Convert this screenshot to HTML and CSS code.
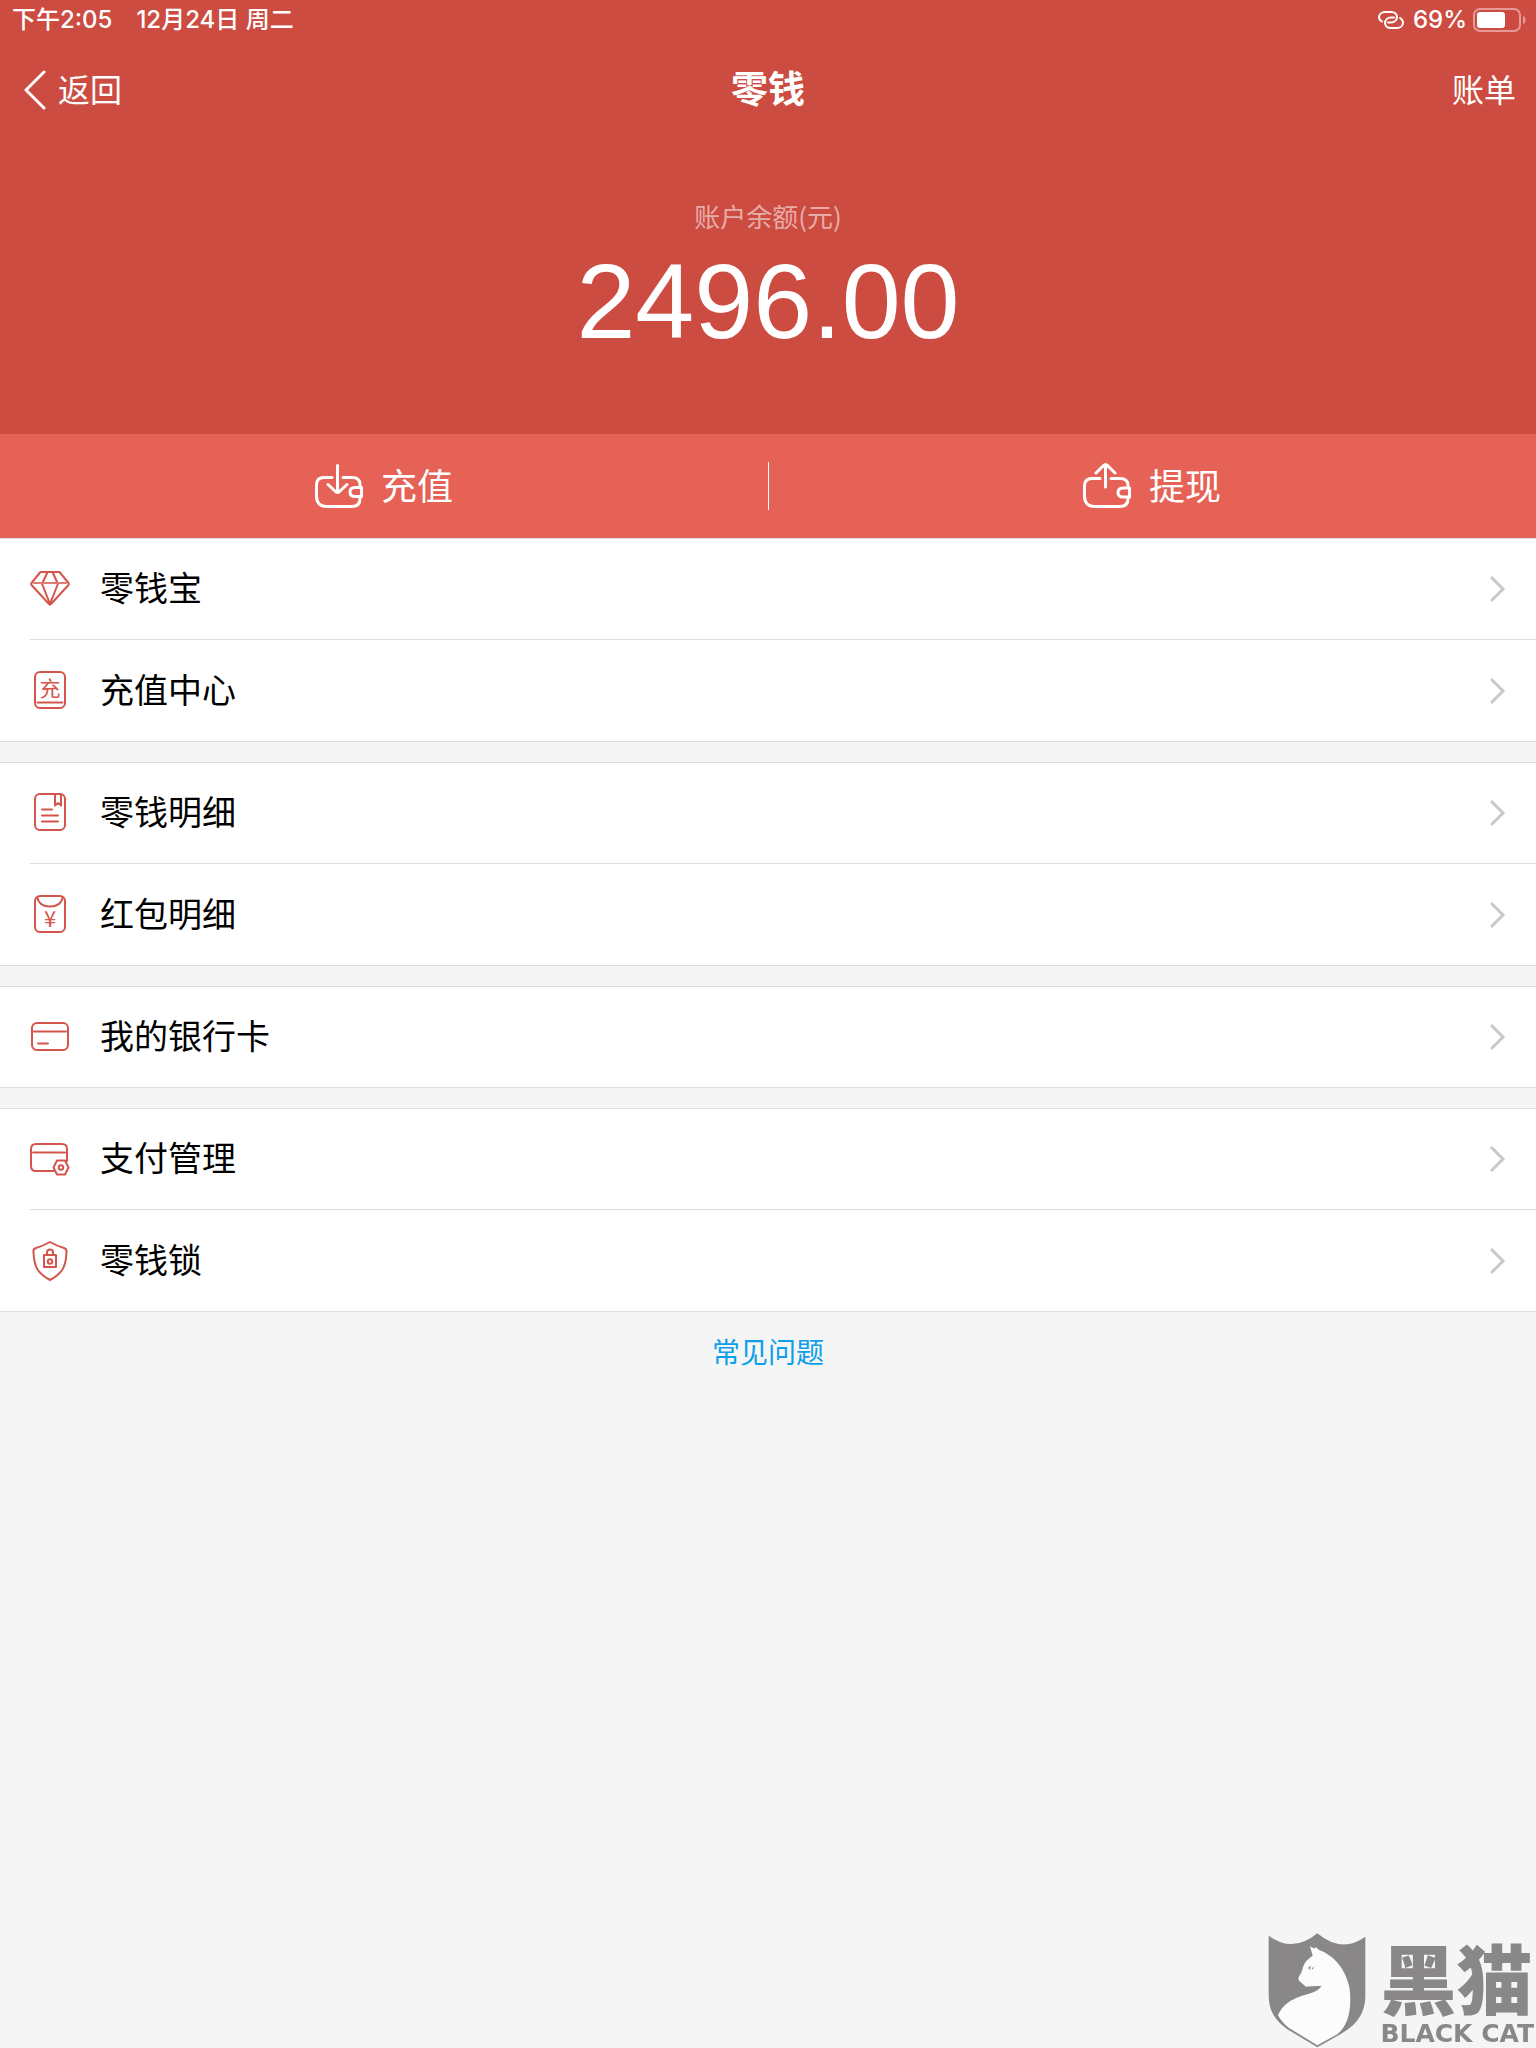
FILE: index.html
```html
<!DOCTYPE html>
<html lang="zh-CN">
<head>
<meta charset="utf-8">
<meta name="viewport" content="width=device-width, initial-scale=1">
<title>零钱</title>
<link rel="stylesheet" href="styles.css">
</head>
<body>
<header class="hero">
  <div class="status">
    <div class="status-side"><span>下午2:05</span><span>12月24日 周二</span></div>
    <div class="status-side status-right">
      <svg class="hotspot" viewBox="0 0 26 20" aria-hidden="true"><path d="M4 11.500C1.500 10 1 8.500 1 7.500C1 4 4 2 7 2H13C17 2 19 4.500 19 7C19 10 16.500 12.500 13 12.500H10M22 8C24.500 9.500 25 11 25 12.500C25 16 22 18 19 18H13C9 18 7 15.500 7 13C7 10 9.500 7.500 13 7.500H16"/></svg>
      <span>69%</span>
      <svg class="battery" viewBox="0 0 54 24" aria-hidden="true"><rect class="shell" x="1" y="1" width="46" height="22" rx="6"/><rect x="4" y="4" width="28" height="16" rx="3"/><path class="tip" d="M50 8C53.500 9 53.500 15 50 16Z"/></svg>
    </div>
  </div>
  <nav class="nav">
    <a class="back" href="#"><svg viewBox="0 0 22 40" aria-hidden="true"><path d="M20 2L2 20L20 38"/></svg><span>返回</span></a>
    <h1>零钱</h1>
    <a class="bill" href="#">账单</a>
  </nav>
  <div class="balance">
    <p class="balance-label">账户余额(元)</p>
    <p class="amount">2496.00</p>
  </div>
</header>
<div class="actions">
  <button type="button">
    <svg viewBox="0 0 48 48" aria-hidden="true"><path d="M17 15.500H9Q1.500 15.500 1.500 23V34Q1.500 44.500 12 44.500H37Q45 44.500 45 36.500V35.500M28 15.500H37Q45 15.500 45 22.500V24M22.500 3.500V30M13 22.500L20.500 29.500Q22.500 31.500 24.500 29.500L32 22.500M46.500 25.500V34.500H40Q35 34.500 35 30T40 25.500Z"/></svg>
    <span>充值</span>
  </button>
  <button type="button">
    <svg viewBox="0 0 48 48" aria-hidden="true"><path d="M17 16.500H9Q1.500 16.500 1.500 24V34Q1.500 44.500 12 44.500H37Q45 44.500 45 36.500V36M28 16.500H37Q45 16.500 45 23.500V24.500M22.500 25V3M13 11L20.500 3.500Q22.500 1.500 24.500 3.500L32 11M46.500 26V35H40Q35 35 35 30.500T40 26Z"/></svg>
    <span>提现</span>
  </button>
</div>
<main class="menu">
  <div class="group">
    <a class="row" href="#">
      <svg class="icon" viewBox="0 0 40 40" aria-hidden="true"><path d="M10.500 3H29.500L38.500 14Q39 15 38.500 16L21 35Q20 36 19 35L1.500 16Q1 15 1.500 14ZM17.500 3L12.500 14Q12 15 12.500 16L20 35L27.500 16Q28 15 27.500 14L22.500 3"/><path class="soft" d="M4 14H36"/></svg>
      <span>零钱宝</span><svg class="chevron" viewBox="0 0 16 28" aria-hidden="true"><path d="M2 3L13 14L2 25"/></svg>
    </a>
    <a class="row" href="#">
      <svg class="icon" viewBox="0 0 40 40" aria-hidden="true"><rect x="5" y="1" width="30" height="36" rx="5"/><path d="M7.500 31.500H32.500"/><text x="20" y="25" font-size="21">充</text></svg>
      <span>充值中心</span><svg class="chevron" viewBox="0 0 16 28" aria-hidden="true"><path d="M2 3L13 14L2 25"/></svg>
    </a>
  </div>
  <div class="group">
    <a class="row" href="#">
      <svg class="icon" viewBox="0 0 40 40" aria-hidden="true"><rect x="5" y="1" width="30" height="36" rx="5"/><path d="M25 2V12.500L28 10L31 12.500V2M12 16.500H22M12 22.500H28M12 28.500H28"/></svg>
      <span>零钱明细</span><svg class="chevron" viewBox="0 0 16 28" aria-hidden="true"><path d="M2 3L13 14L2 25"/></svg>
    </a>
    <a class="row" href="#">
      <svg class="icon" viewBox="0 0 40 40" aria-hidden="true"><rect x="5" y="1" width="30" height="36" rx="5"/><path d="M7.500 2.500C8 8 13 11.500 20 11.500S32 8 32.500 2.500"/><text x="20" y="32" font-size="22">¥</text></svg>
      <span>红包明细</span><svg class="chevron" viewBox="0 0 16 28" aria-hidden="true"><path d="M2 3L13 14L2 25"/></svg>
    </a>
  </div>
  <div class="group">
    <a class="row" href="#">
      <svg class="icon" viewBox="0 0 40 40" aria-hidden="true"><rect x="2" y="6" width="36" height="27" rx="5"/><path d="M4 14.500H36M8 26.500H18"/></svg>
      <span>我的银行卡</span><svg class="chevron" viewBox="0 0 16 28" aria-hidden="true"><path d="M2 3L13 14L2 25"/></svg>
    </a>
  </div>
  <div class="group">
    <a class="row" href="#">
      <svg class="icon" viewBox="0 0 40 40" aria-hidden="true"><path d="M24 32H6Q1 32 1 27V10Q1 5 6 5H32Q37 5 37 10V22M3 13.500H35M27 21.500H35L38.500 28.500L35 35.500H27L23.500 28.500Z"/><circle cx="31" cy="28.500" r="2.200"/></svg>
      <span>支付管理</span><svg class="chevron" viewBox="0 0 16 28" aria-hidden="true"><path d="M2 3L13 14L2 25"/></svg>
    </a>
    <a class="row" href="#">
      <svg class="icon" viewBox="0 0 40 40" aria-hidden="true"><path d="M20 1Q27 5 34 7Q37 8 36.500 11C36 25 33 32 20 39C7 32 4 25 3.500 11Q3 8 6 7Q13 5 20 1ZM14 14H26V26H14ZM17 14V11.500Q17 8.500 20 8.500T23 11.500V14"/><circle cx="20" cy="20.500" r="2.200"/></svg>
      <span>零钱锁</span><svg class="chevron" viewBox="0 0 16 28" aria-hidden="true"><path d="M2 3L13 14L2 25"/></svg>
    </a>
  </div>
  <a class="faq" href="#">常见问题</a>
</main>
<aside class="watermark">
  <svg viewBox="50 68 294 345" aria-hidden="true">
    <path class="shield" d="M52 76Q125 130 198 69Q271 130 342 79V260C340 315 312 345 270 370L198 411L108 357C70 330 52 300 52 255Z"/>
    <path class="cat" d="M80 315C100 270 140 260 180 248Q200 242 211 227Q185 226 164 229L143 211Q139 203 143 198Q149 190 152 181C158 157 166 148 184 136L176 108L190 115L192 109L202 118C250 135 285 180 295 235C302 300 290 345 258 372L198 405L112 352Q92 337 80 315Z"/>
    <path class="shield" d="M170 173L178 166L176 178ZM180 178L186 168V175Z"/>
  </svg>
  <div class="brand"><span class="brand-cn">黑猫</span><span class="brand-en">BLACK CAT</span></div>
</aside>
</body>
</html>
```
FILE: styles.css
```css
* { box-sizing: border-box; }
body {
  margin: 0;
  min-height: 100vh;
  background: #f5f5f5;
  color: #000;
  font-family: "Liberation Sans", "Noto Sans CJK SC", sans-serif;
}
a { color: inherit; text-decoration: none; }
h1, p { margin: 0; }
svg { display: block; flex: none; fill: none; stroke-linecap: round; stroke-linejoin: round; }

.hero { background: #cc4c41; color: #fff; padding-bottom: 76px; }
.status {
  display: flex;
  justify-content: space-between;
  align-items: center;
  height: 40px;
  padding: 0 9px 0 12px;
  font: 500 24px/40px Inter, "Noto Sans CJK SC", sans-serif;
}
.status-side { display: flex; align-items: center; gap: 24px; }
.status-right { gap: 6px; }
.status-right span { padding-left: 3px; }
.hotspot { width: 26px; height: 20px; stroke: #fff; stroke-width: 2; }
.battery { width: 54px; height: 24px; fill: #fff; }
.battery .shell { fill: none; stroke: #e39a94; stroke-width: 2; }
.battery .tip { fill: #e39a94; }

.nav {
  display: grid;
  grid-template-columns: 1fr auto 1fr;
  align-items: center;
  height: 100px;
  padding: 0 20px;
  font: 400 32px/48px "Noto Sans CJK SC", sans-serif;
}
.nav h1 { padding-bottom: 6px; font-size: 37px; font-weight: 700; line-height: 56px; }
.back { display: flex; align-items: center; gap: 12px; padding-left: 4px; }
.back svg { width: 22px; height: 40px; stroke: #fff; stroke-width: 3; }
.back span, .bill { padding-bottom: 4px; }
.bill { justify-self: end; }

.balance { padding-top: 56px; text-align: center; }
.balance-label { font: 400 26px/40px "Noto Sans CJK SC", sans-serif; color: #e8aca7; }
.amount { padding-top: 8px; font-size: 106px; line-height: 114px; }

.actions { display: grid; grid-template-columns: 1fr 1fr; background: #e66156; }
.actions button {
  display: flex;
  align-items: center;
  justify-content: center;
  gap: 18px;
  height: 104px;
  padding: 0;
  border: 0;
  background: none;
  color: #fff;
  font: 400 36px/52px "Noto Sans CJK SC", sans-serif;
}
.actions button + button {
  background: linear-gradient(#fff, #fff) left center / 1px 48px no-repeat;
}
.actions svg { width: 48px; height: 48px; stroke: #fff; stroke-width: 3; }
.actions span { padding-bottom: 4px; }

.menu { display: flex; flex-direction: column; gap: 20px; }
.group { border: solid #d9dee0; border-width: 1px 0; background: #fff; padding-left: 30px; }
.row {
  display: flex;
  align-items: center;
  gap: 30px;
  height: 100px;
  padding-right: 30px;
  font: 400 34px/50px "Noto Sans CJK SC", sans-serif;
}
.row + .row { height: 102px; border-top: 1px solid #d9dee0; }
.row span { flex: 1; padding-bottom: 4px; }
.icon { width: 40px; height: 40px; stroke: #d4554b; stroke-width: 2; }
.icon .soft { stroke: #de7b73; }
.icon text { fill: #d4554b; stroke: none; text-anchor: middle; font-family: "Noto Sans CJK SC", sans-serif; font-weight: 400; }
.chevron { width: 16px; height: 28px; stroke: #c7c7cc; stroke-width: 3; stroke-linecap: square; stroke-linejoin: miter; }
.faq { align-self: center; font: 400 28px/38px "Noto Sans CJK SC", sans-serif; color: #0d9fe9; }

.watermark { position: fixed; right: 2px; bottom: 0; display: flex; align-items: flex-end; gap: 14px; color: #8a8788; }
.watermark svg { width: 98px; height: 115px; }
.shield { fill: #8a8788; }
.cat { fill: #fcfcfc; }
.brand { display: flex; flex-direction: column; gap: 8px; }
.brand-cn { font: 900 76px/72px "Noto Sans CJK SC", sans-serif; }
.brand-en { font: 700 25px/28px "DejaVu Sans", sans-serif; }
```
